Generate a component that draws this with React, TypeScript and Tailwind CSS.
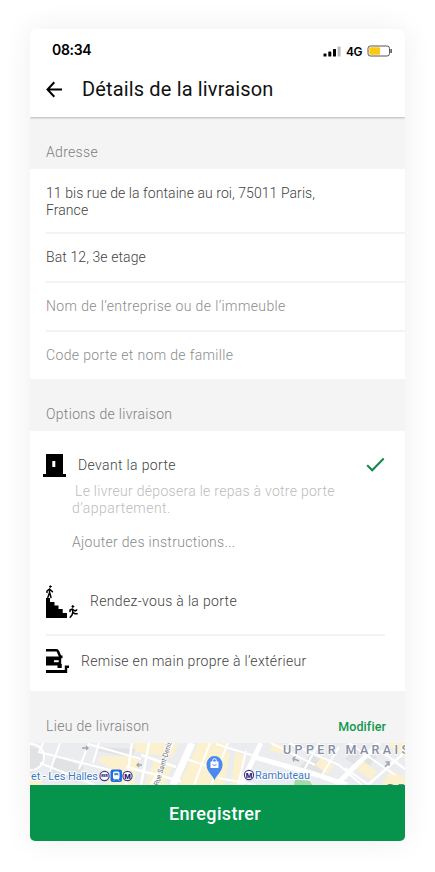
import type { ReactNode } from "react";
import clsx from "clsx";

interface AddressField {
  id: string;
  value: string;
  filled: boolean;
  tracking: string;
}

const fields: AddressField[] = [
  { id: "details", value: "Bat 12, 3e etage", filled: true, tracking: "tracking-[0.1px]" },
  { id: "company", value: "Nom de l’entreprise ou de l’immeuble", filled: false, tracking: "tracking-[0.38px]" },
  { id: "code", value: "Code porte et nom de famille", filled: false, tracking: "tracking-[0.36px]" },
];

const StatusBar = () => (
  <div className="flex items-center justify-between pl-[22px] pr-3 pt-3 h-[32px]">
    <span className="-mt-0.5 font-['Inter'] font-semibold text-[14px] leading-5 tracking-[-0.3px] text-black">
      08:34
    </span>
    <div className="flex items-center -mt-0.5">
      <svg width="18" height="11" viewBox="0 0 18 11" className="mt-[3px]">
        <rect x="0.5" y="7.5" width="3" height="3" rx="0.6" fill="#000" />
        <rect x="5.3" y="5.5" width="3" height="5" rx="0.6" fill="#000" />
        <rect x="10" y="3" width="3" height="7.5" rx="0.6" fill="#000" />
        <rect x="14.6" y="0.5" width="3" height="10" rx="0.6" fill="#bbb" />
      </svg>
      <span className="ml-[5px] mt-[3px] font-['Inter'] font-semibold text-[12px] leading-4 tracking-[-0.5px] text-black">
        4G
      </span>
      <svg width="26" height="12" viewBox="0 0 26 12" className="ml-[5px] mt-[2px]">
        <rect x="1" y="1" width="21.5" height="10" rx="2.4" fill="#fff" stroke="#555" />
        <rect x="2.3" y="2.3" width="10.7" height="7.4" rx="1" fill="#fbc912" />
        <path d="M23.5 4h1.200v4h-1.200z" fill="#222" />
      </svg>
    </div>
  </div>
);

const DoorIcon = () => (
  <svg width="23" height="23" viewBox="0 0 23 23" fill="#000">
    <path fillRule="evenodd" d="M3 0h17v20h3v3H0v-3h3zM9.300 7v6h3V7z" />
  </svg>
);

const StairsIcon = () => (
  <svg width="33" height="34" viewBox="0 0 33 34">
    <path d="M0 13h4v4h4.500v3.500h4v3.500h4.200v4h4.300v5H0z" fill="#000" />
    <g fill="none" stroke="#000" strokeWidth="1.500" strokeLinecap="round" strokeLinejoin="round">
      <circle cx="4.300" cy="1.600" r="0.800" fill="#000" strokeWidth="1" />
      <path d="M3.500 4v4M3.500 4l-2.500 2v1.500M4 4.500l2.500 2.300M3.400 8l-1.600 4.500M3.800 8l1.200 4.500" />
      <circle cx="26.800" cy="21.500" r="0.900" fill="#000" strokeWidth="1" />
      <path d="M26.500 24l.3 3.500M26.500 24l-2.500 1v1.500M27 24.500l2 1.500 1.700-1M26.800 27.500l-.8 2.500-1.800 2.200M27 27.500l2.200 1.300h2" />
    </g>
  </svg>
);

const CarIcon = () => (
  <svg width="24" height="26" viewBox="0 0 24 26" fill="#000">
    {/* roof and windscreen */}
    <path d="M0 2.300h10.500q1 0 1.400 1l2.600 6" fill="none" stroke="#000" strokeWidth="2.500" />
    {/* body */}
    <rect x="0" y="8.500" width="15.200" height="9" />
    <rect x="13.500" y="7.500" width="3" height="2.700" />
    {/* headlight */}
    <rect x="8" y="12.200" width="4.700" height="2" fill="#fff" />
    <rect x="11.500" y="16" width="4.200" height="4" />
    <path d="M0 22h18.800v-4.500H23V20h-1.800v5H0z" />
  </svg>
);

const SectionTitle = ({ children, action }: { children: ReactNode; action?: string }) => (
  <div className="h-[52px] bg-[#f4f4f4] pl-4 pr-[19px] pt-[26px] flex items-start justify-between">
    <h2 className="font-light text-[14px] leading-[18px] tracking-[0.31px] text-[#7e7e7e]">{children}</h2>
    {action && (
      <button className="font-medium text-[12.500px] leading-[19px] tracking-[0.1px] text-[#11984f]">
        {action}
      </button>
    )}
  </div>
);

// tiny purple "M" and RER badges of the map
const MetroBadge = ({ x, y, label }: { x: number; y: number; label: string }) => (
  <g>
    <circle cx={x} cy={y} r="4.600" fill="#fff" stroke="#3f3686" strokeWidth="1.100" />
    <text
      x={x}
      y={label === "M" ? y + 2.600 : y + 1.300}
      textAnchor="middle"
      fontSize={label === "M" ? 7.500 : 3.600}
      fontWeight="900"
      fill="#29207a"
    >
      {label}
    </text>
  </g>
);

const DeliveryMap = () => (
  <svg width="375" height="42" viewBox="0 0 375 42" className="block font-['Roboto']">
    <rect width="375" height="42" fill="#ebecef" />
    <g fill="#e1e2e4">
      <path d="M0 3l12 4 3 12-12 10-3 1z" />
      <path d="M25 13l29 11-7 16-29-12z" />
      <path d="M69 4l37 2-4 8-35-6z" />
      <path d="M281 11l18 11-8 15-21-13zM327 4l20 10-12 14-20-12z" />
    </g>
    <g fill="#fbf1cf">
      <path d="M71 13l33 1 6 4-7 24H78l4-16-14-8z" />
      <path d="M104 0h45l-7 14-36-5zM125 15l18 6-8 21h-20z" />
      <path d="M168 0h31l-11 42h-39z" />
      <path d="M191 8l9 2-6 32h-11zM205 9l9 3-4 30h-9zM0 33l13 3-2 6H0z" />
      <path d="M243 0l14 3-4 8-14-4zM291 15l13 8-7 8-12-9zM333 18l14 10-6 9-14-11zM356 0h19v15zM361 27l14 8v7h-24z" />
    </g>
    <g stroke="#fff" fill="none" strokeWidth="2">
      <circle cx="1" cy="14" r="13" />
      <path d="M13 0l-4 9 75 19M20 28l10-28M10 20l55 22M49 26l10-26M58 1l53 15M63 20l6-20" />
      <path d="M102 0l-6 42M119 0l-8 42M96 24l55 14M111 12l35 12M143 0l-22 42" strokeWidth="2.500" />
      <path d="M162 0l-19 42" strokeWidth="7" />
      <path d="M180 0l-16 42M198 0l-17 42M156 16l31 10M186 1l51 16M188 35l38 7M216 8l-8 34" strokeWidth="2" />
      <path d="M231 0l-20 42" strokeWidth="5" />
      <path d="M224 14l60 17 33 11" strokeWidth="5" />
      <path d="M241 0l44 22M289 0l-15 27M309 4l-17 28M259 0l50 22 23 20M319 0l46 32M339 42l-24-17" />
      <path d="M349 0l-43 42" strokeWidth="5" />
      <path d="M375 9l-37 33M375 26l-24-18" strokeWidth="2.500" />
    </g>
    <path d="M265 36l15 2 2 4h-18z" fill="#a5d9aa" />
    <g stroke="#a3a5b0" strokeWidth="1.400" fill="none">
      <path d="M52 5h6M56 3l2 2-2 2M112 22h-5M109 20l-2 2 2 2M269 18l-6-2.500M265.500 13.500l-2.500 2 1 3M355 24l4-5M355.500 19h3.500v4" />
    </g>
    <g fill="#3b78c3" fontSize="11" stroke="#fff" strokeWidth="2" strokeLinejoin="round" paintOrder="stroke">
      <text x="1" y="36.500" textLength="67">et - Les Halles</text>
      <text x="225" y="36" textLength="55">Rambuteau</text>
    </g>
    <MetroBadge x={74.500} y={33} label="RER" />
    <rect x="80.500" y="26.500" width="11.500" height="12.500" rx="2.200" fill="#1c6fe0" />
    <rect x="83" y="28.500" width="6.500" height="7.500" rx="1.500" fill="#fff" />
    <path d="M84 30h4.500v2.200H84zM83.500 38l1.500-2h3l1.500 2" fill="#1c6fe0" stroke="#fff" strokeWidth="0.500" />
    <MetroBadge x={97.500} y={33} label="M" />
    <MetroBadge x={219} y={32} label="M" />
    <text
      transform="translate(128.500 43) rotate(-73)"
      fontSize="7.500"
      fill="#70717c"
      stroke="#fff"
      strokeWidth="1.500"
      paintOrder="stroke"
      textLength="46"
      lengthAdjust="spacingAndGlyphs"
    >
      Rue Saint-Denis
    </text>
    <g>
      <path d="M184.500 37.500c-1.200-5-8-8.500-8-16a8 8.500 0 0 1 16 0c0 7.500-6.800 11-8 16z" fill="#4a89ef" />
      <path d="M180.500 18.500h8v6.500h-8z" fill="#fff" />
      <path d="M182.700 19v-1.500a1.800 1.800 0 0 1 3.600 0V19" stroke="#fff" fill="none" />
      <path d="M182.500 21.500q2 2 4 0" stroke="#4a89ef" fill="none" />
    </g>
    <text x="253" y="11" fontSize="12.500" fontWeight="500" fill="#858ca4" stroke="#fff" strokeWidth="1.500" paintOrder="stroke" textLength="126">
      UPPER MARAIS
    </text>
    <text x="357" y="48.500" fontSize="11" fontWeight="500" fill="#70809a" textLength="28">
      REP
    </text>
  </svg>
);

function App() {
  return (
    <main className="min-h-[872px] bg-white px-[30px] pt-[29px] font-['Roboto',sans-serif] overflow-hidden">
      <div className="w-[375px] h-[812px] rounded-[5px] overflow-hidden bg-white shadow-[0_0_30px_rgba(0,0,0,0.07)] flex flex-col">
        <header className="relative h-[88px] shrink-0 bg-white shadow-[0_1px_2px_rgba(0,0,0,0.25)]">
          <StatusBar />
          <div className="flex items-center pl-4 pt-[14px]">
            <svg width="17" height="17" viewBox="0 0 17 17" fill="none" stroke="#000" strokeWidth="2">
              <path d="M16 8.500H1.800M8.300 1.200L1.500 8.500l6.800 7.300" />
            </svg>
            <h1 className="ml-[19px] text-[20px] leading-7 font-normal tracking-[0.15px] text-[#111]">
              Détails de la livraison
            </h1>
          </div>
        </header>

        <SectionTitle>Adresse</SectionTitle>
        <section className="h-[210px] pl-4 text-[14px] leading-[17px]">
          <p className="h-[63px] pt-4 tracking-[0.07px] text-[#3f3f3f] font-light">
            11 bis rue de la fontaine au roi, 75011 Paris,
            <br />
            France
          </p>
          {fields.map((f) => (
            <p
              key={f.id}
              className={clsx(
                "h-[49px] border-t-2 border-[#f3f3f3] pt-[15px] font-light",
                f.tracking,
                f.filled ? "text-[#3f3f3f]" : "text-[#8c8c8c]"
              )}
            >
              {f.value}
            </p>
          ))}
        </section>

        <SectionTitle>Options de livraison</SectionTitle>
        <section className="h-[260px] text-[14px] leading-[17px] font-light text-[#3f3f3f]">
          <div className="flex items-center pl-[13px] pr-5 pt-[23px]">
            <DoorIcon />
            <span className="ml-3 tracking-[0.36px]">Devant la porte</span>
            <svg width="19" height="15" viewBox="0 0 19 15" fill="none" stroke="#11864a" strokeWidth="2" className="ml-auto -mt-0.5">
              <path d="M1.200 8.300l5 5L17.700 1.500" />
            </svg>
          </div>
          <div className="pl-[42px] pt-[6px]">
            <p className="text-[#bcbcbc] tracking-[0.28px]">
              <span className="ml-[3px]">Le livreur déposera le repas à votre porte</span>
              <br />
              <span className="tracking-[0.45px]">d’appartement.</span>
            </p>
            <p className="mt-[17px] text-[#8a8a8a] tracking-[0.3px]">Ajouter des instructions...</p>
          </div>
          <div className="ml-4 mr-5 mt-[34px] h-[51px] flex items-start border-b-2 border-[#f3f3f3]">
            <StairsIcon />
            <span className="ml-[11px] mt-2 tracking-[0.33px]">Rendez-vous à la porte</span>
          </div>
          <div className="ml-4 flex items-center mt-[12px]">
            <CarIcon />
            <span className="ml-[11px] tracking-[0.31px]">Remise en main propre à l’extérieur</span>
          </div>
        </section>

        <SectionTitle action="Modifier">Lieu de livraison</SectionTitle>
        <DeliveryMap />
        <button className="h-14 shrink-0 bg-[#06944c] text-white text-[18px] font-medium tracking-[0.35px] pr-[5px]">
          Enregistrer
        </button>
      </div>
    </main>
  );
}

export default App;
